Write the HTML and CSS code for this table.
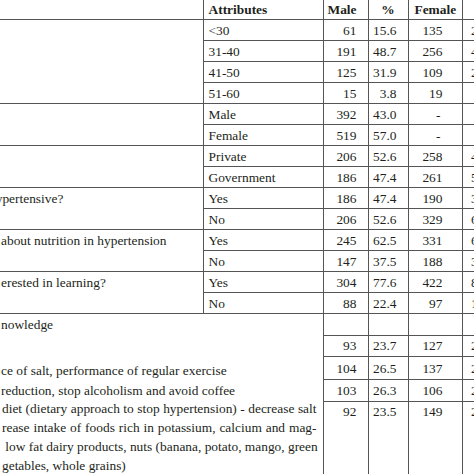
FILE: index.html
```html
<!DOCTYPE html>
<html lang="en">
<head>
<meta charset="utf-8">
<title>Table</title>
<link rel="stylesheet" href="styles.css">
</head>
<body>
<table class="data">
  <colgroup>
    <col class="c-label"><col class="c-attr"><col class="c-male"><col class="c-pct"><col class="c-female"><col class="c-pct2">
  </colgroup>
  <thead>
    <tr class="hrow">
      <th class="lab"></th>
      <th class="attr">Attributes</th>
      <th class="num">Male</th>
      <th class="pct-h">%</th>
      <th class="fem-h">Female</th>
      <th class="pct-h">%</th>
    </tr>
  </thead>
  <tbody>
    <tr><td class="lab grp" rowspan="4"></td><td class="attr">&lt;30</td><td class="num">61</td><td class="pct">15.6</td><td class="fem">135</td><td class="pct">26.0</td></tr>
    <tr><td class="attr">31-40</td><td class="num">191</td><td class="pct">48.7</td><td class="fem">256</td><td class="pct">49.3</td></tr>
    <tr><td class="attr">41-50</td><td class="num">125</td><td class="pct">31.9</td><td class="fem">109</td><td class="pct">21.0</td></tr>
    <tr><td class="attr">51-60</td><td class="num">15</td><td class="pct">3.8</td><td class="fem">19</td><td class="pct">3.7</td></tr>

    <tr><td class="lab grp" rowspan="2"></td><td class="attr">Male</td><td class="num">392</td><td class="pct">43.0</td><td class="fem dash">-</td><td class="pct"></td></tr>
    <tr><td class="attr">Female</td><td class="num">519</td><td class="pct">57.0</td><td class="fem dash">-</td><td class="pct"></td></tr>

    <tr><td class="lab grp" rowspan="2"></td><td class="attr">Private</td><td class="num">206</td><td class="pct">52.6</td><td class="fem">258</td><td class="pct">49.7</td></tr>
    <tr><td class="attr">Government</td><td class="num">186</td><td class="pct">47.4</td><td class="fem">261</td><td class="pct">50.3</td></tr>

    <tr><td class="lab grp" rowspan="2"><span class="cut-hy">hypertensive?</span></td><td class="attr">Yes</td><td class="num">186</td><td class="pct">47.4</td><td class="fem">190</td><td class="pct">36.6</td></tr>
    <tr><td class="attr">No</td><td class="num">206</td><td class="pct">52.6</td><td class="fem">329</td><td class="pct">63.4</td></tr>

    <tr><td class="lab grp" rowspan="2">about nutrition in hypertension</td><td class="attr">Yes</td><td class="num">245</td><td class="pct">62.5</td><td class="fem">331</td><td class="pct">63.8</td></tr>
    <tr><td class="attr">No</td><td class="num">147</td><td class="pct">37.5</td><td class="fem">188</td><td class="pct">36.2</td></tr>

    <tr><td class="lab grp" rowspan="2">erested in learning?</td><td class="attr">Yes</td><td class="num">304</td><td class="pct">77.6</td><td class="fem">422</td><td class="pct">81.3</td></tr>
    <tr><td class="attr">No</td><td class="num">88</td><td class="pct">22.4</td><td class="fem">97</td><td class="pct">18.7</td></tr>

    <tr class="krow"><td class="ktext" colspan="2">nowledge</td><td class="num"></td><td class="pct"></td><td class="fem"></td><td class="pct"></td></tr>
    <tr class="krow"><td class="ktext" colspan="2"></td><td class="num">93</td><td class="pct">23.7</td><td class="fem">127</td><td class="pct">24.5</td></tr>
    <tr class="krow"><td class="ktext low" colspan="2">ce of salt, performance of regular exercise</td><td class="num">104</td><td class="pct">26.5</td><td class="fem">137</td><td class="pct">26.4</td></tr>
    <tr class="krow"><td class="ktext" colspan="2">reduction, stop alcoholism and avoid coffee</td><td class="num">103</td><td class="pct">26.3</td><td class="fem">106</td><td class="pct">20.4</td></tr>
    <tr class="klast">
      <td class="ktext multi" colspan="2">
        <span class="jl first">diet (dietary approach to stop hypertension) - decrease salt</span>
        <span class="jl">rease intake of foods rich in potassium, calcium and mag-</span>
        <span class="jl">&nbsp;low fat dairy products, nuts (banana, potato, mango, green</span>
        <span class="ll">getables, whole grains)</span>
      </td>
      <td class="num">92</td><td class="pct">23.5</td><td class="fem">149</td><td class="pct">28.7</td>
    </tr>
  </tbody>
</table>
</body>
</html>
```

FILE: styles.css
```css
html, body {
  margin: 0;
  padding: 0;
  overflow: hidden;
  background: #ffffff;
}

body {
  width: 474px;
  height: 474px;
  font-family: "Liberation Serif", "Times New Roman", serif;
  font-size: 13.4px;
  color: #231f20;
}

.data {
  border-collapse: collapse;
  table-layout: fixed;
  width: 506px;
}

.c-label { width: 203px; }
.c-attr { width: 120px; }
.c-male { width: 45px; }
.c-pct { width: 40px; }
.c-female { width: 54px; }
.c-pct2 { width: 44px; }

.data th,
.data td {
  padding: 0;
  white-space: nowrap;
  overflow: hidden;
  border: 1px solid #555555;
  line-height: 19px;
}

.data tr {
  height: 21px;
}

.data .hrow {
  height: 19px;
}

.data th {
  font-weight: bold;
  border-top: none;
}

.data .lab {
  border-left: none;
  text-align: left;
  padding-left: 1px;
}

.data .grp {
  vertical-align: top;
  padding-top: 1px;
}

.cut-hy {
  display: inline-block;
  margin-left: -12px;
}

.data .attr {
  text-align: left;
  padding-left: 5px;
}

.data .num {
  text-align: right;
  padding-right: 11px;
}

.data .pct {
  text-align: right;
  padding-right: 11px;
}

.data .pct-h {
  text-align: center;
}

.data .fem {
  text-align: right;
  padding-right: 19px;
}

.data .fem-h {
  text-align: left;
  padding-left: 6px;
}

.data .dash {
  padding-right: 21px;
}

.data .krow {
  height: 21.5px;
}

.data .ktext {
  border-left: none;
  border-top: none;
  border-bottom: none;
  text-align: left;
  padding-left: 1px;
}

.data .low {
  padding-top: 4px;
}

.data .klast td {
  vertical-align: top;
  padding-top: 0;
  border-bottom: none;
}

.data .multi {
  white-space: normal;
  padding-right: 6px;
  padding-left: 2px;
}

.jl {
  display: block;
  white-space: nowrap;
  text-align: justify;
  text-align-last: justify;
}

.first {
  margin-top: -2px;
}

.ll {
  display: block;
  text-align: left;
}
```
